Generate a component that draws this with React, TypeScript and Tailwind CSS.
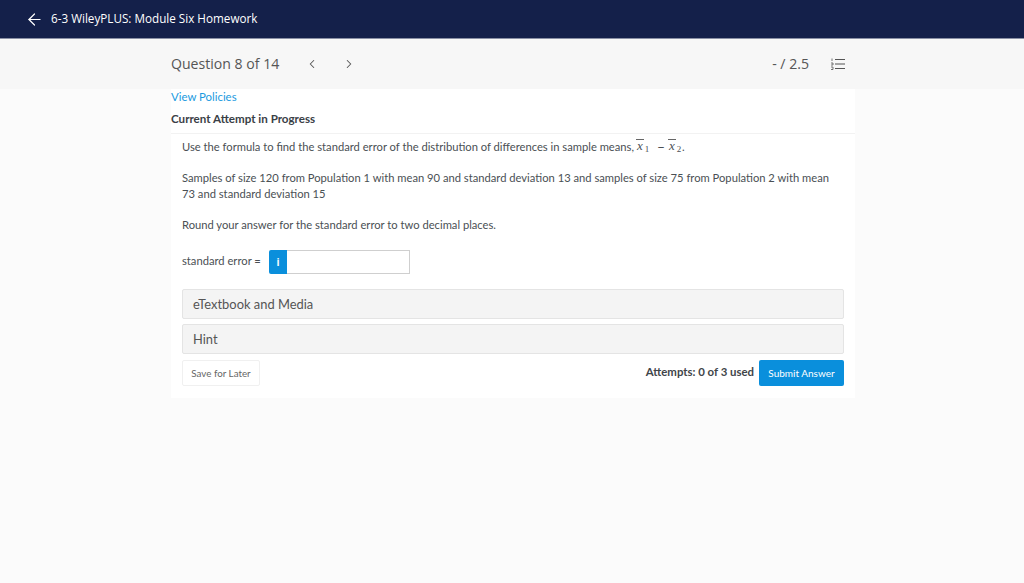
import React from "react";
import { ArrowLeft, ChevronLeft, ChevronRight } from "lucide-react";

function Xbar({ n }: { n: string }) {
  return (
    <span className="inline-flex items-baseline">
      <span className="border-t border-[#666] leading-[11px] italic font-['Liberation_Serif',serif] text-[13px] w-[8px] text-center">x</span>
      <span className="text-[9px] translate-y-[2px] font-['Liberation_Serif',serif] w-[6px] text-center">{n}</span>
    </span>
  );
}

export default function App() {
  return (
    <div className="min-h-[583px] bg-[#fbfbfb] font-['Lato',sans-serif] text-[#3f4549]">
      <header className="h-[39px] bg-[#14204a] border-b border-[#8a90a5] flex items-center pl-[25px] text-white">
        <ArrowLeft size={19} strokeWidth={1.5} />
        <span className="ml-[7px] font-['Open_Sans',sans-serif] text-[11.7px] font-medium">6-3 WileyPLUS: Module Six Homework</span>
      </header>

      <div className="h-[50px] bg-[#f7f7f7]">
        <div className="w-[684px] h-full ml-[171px] flex items-center font-['Open_Sans',sans-serif] text-[#555]">
          <span className="text-[14.1px]">Question 8 of 14</span>
          <ChevronLeft size={14} strokeWidth={1.8} className="ml-[26px]" />
          <ChevronRight size={14} strokeWidth={1.8} className="ml-[23px]" />
          <span className="ml-auto text-[14.1px]">- / 2.5</span>
          <svg width="14" height="12" viewBox="0 0 14 12" className="ml-[22px] mr-[10px]" stroke="#555" fill="none">
            <path d="M4 1.500h10M4 6h10M4 10.500h10" strokeWidth="1.200" />
            <path d="M1 0.500v2.500M0 5h2v2H0M0 9h2v2.500H0" strokeWidth="0.800" />
          </svg>
        </div>
      </div>

      <main className="w-[684px] h-[309px] ml-[171px] bg-white flex flex-col">
        <a className="block text-[#1a9ae0] text-[11.4px] leading-[14px] mt-[1px]">View Policies</a>
        <div className="text-[11.6px] font-bold leading-[14px] mt-[8px] pb-[7px] border-b border-[#f2f2f2] text-[#3a4046]">Current Attempt in Progress</div>

        <div className="px-[11px] text-[11.2px] leading-[16px] text-[#4a5054]">
          <p className="mt-[5px] flex items-center h-[16px]">
            <span className="mr-[2px]">Use the formula to find the standard error of the distribution of differences in sample means,</span>
            <Xbar n="1" />
            <span className="ml-[6px] mr-[2px] w-[10px] text-center text-[13px]">−</span>
            <Xbar n="2" />
            <span>.</span>
          </p>
          <p className="mt-[15px]">Samples of size 120 from Population 1 with mean 90 and standard deviation 13 and samples of size 75 from Population 2 with mean 73 and standard deviation 15</p>
          <p className="mt-[15px]">Round your answer for the standard error to two decimal places.</p>
          <div className="flex items-center mt-[17px] h-[24px]">
            <span className="pb-[2px] w-[80px]">standard error =</span>
            <span className="ml-[7px] w-[18px] h-[24px] bg-[#0a8fdc] rounded-l-[2px] flex items-center justify-center text-white text-[10px] font-bold font-['Open_Sans',sans-serif]">i</span>
            <div className="w-[123px] h-[24px] bg-white border border-[#cfcfcf] border-l-0" />
          </div>

          <div className="mt-[15px] h-[30px] flex items-center px-[10px] bg-[#f4f4f4] border border-[#e4e4e4] rounded-[2px] text-[12.9px] text-[#555]">eTextbook and Media</div>
          <div className="mt-[5px] h-[30px] flex items-center px-[10px] bg-[#f4f4f4] border border-[#e4e4e4] rounded-[2px] text-[12.9px] text-[#555]">Hint</div>

          <div className="mt-[6px] flex items-center justify-between">
            <button className="w-[78px] h-[26px] bg-white border border-[#f0f0f0] rounded-[2px] text-[9.8px] text-[#666]">Save for Later</button>
            <div className="flex items-center">
              <span className="text-[11.4px] font-bold text-[#3f4549] mr-[5px] pb-[2px]">Attempts: 0 of 3 used</span>
              <button className="w-[85px] h-[26px] bg-[#0a8fdc] rounded-[2px] text-[10px] text-white">Submit Answer</button>
            </div>
          </div>
        </div>
      </main>
    </div>
  );
}
